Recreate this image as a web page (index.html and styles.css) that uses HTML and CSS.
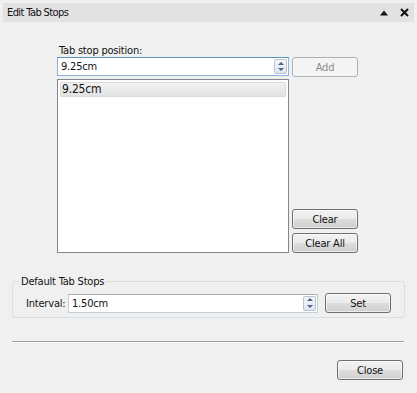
FILE: index.html
```html
<!DOCTYPE html>
<html lang="en">
<head>
    <meta charset="UTF-8">
    <meta name="viewport" content="width=device-width, initial-scale=1.0">
    <title>Edit Tab Stops</title>
    <link rel="stylesheet" href="styles.css">
</head>
<body>
    <div class="dialog">
        <div class="titlebar">
            <span class="title">Edit Tab Stops</span>
            <span class="title-icons">
                <svg width="8" height="6" viewBox="0 0 8 6"><path d="M0 5.5 L4 0.5 L8 5.5 Z" fill="#111"/></svg>
                <svg width="9" height="9" viewBox="0 0 9 9"><path d="M1 1 L8 8 M8 1 L1 8" stroke="#111" stroke-width="2"/></svg>
            </span>
        </div>

        <div class="editor">
            <div class="label">Tab stop position:</div>
            <div class="editor-body">
                <div class="editor-left">
                    <div class="spinbox focused">
                        <span class="spin-text">9.25cm</span>
                        <span class="spin-arrows"><span class="up"></span><span class="down"></span></span>
                    </div>
                    <div class="listbox">
                        <div class="list-item selected">9.25cm</div>
                    </div>
                </div>
                <div class="editor-right">
                    <button class="disabled">Add</button>
                    <button class="push-bottom">Clear</button>
                    <button>Clear All</button>
                </div>
            </div>
        </div>

        <fieldset class="group">
            <legend>Default Tab Stops</legend>
            <div class="group-row">
                <span class="row-label">Interval:</span>
                <div class="spinbox wide">
                    <span class="spin-text">1.50cm</span>
                    <span class="spin-arrows"><span class="up"></span><span class="down"></span></span>
                </div>
                <button>Set</button>
            </div>
        </fieldset>

        <div class="separator"></div>

        <div class="footer">
            <button>Close</button>
        </div>
    </div>
</body>
</html>
```

FILE: styles.css
```css
body {
    margin: 0;
    background-color: #f0f0f0;
    font-family: "DejaVu Sans Condensed", "Liberation Sans", Arial, sans-serif;
    font-size: 11px;
    letter-spacing: -0.2px;
    color: #111;
}
.dialog {
    width: 417px;
    height: 393px;
    box-sizing: border-box;
    padding-top: 3px;
}
.titlebar {
    margin: 0 3px;
    height: 19px;
    background-color: #e2e2e2;
    display: flex;
    align-items: center;
    justify-content: space-between;
    padding: 0 4px;
}
.title {
    letter-spacing: -0.6px;
}
.title-icons {
    display: flex;
    align-items: center;
    gap: 12px;
    padding-right: 1px;
}
.editor {
    margin-top: 22px;
    padding-left: 57px;
}
.label {
    line-height: 13px;
    padding-left: 2px;
}
.editor-body {
    display: flex;
    gap: 3px;
}
.editor-left {
    width: 232px;
    display: flex;
    flex-direction: column;
    gap: 3px;
}
.editor-right {
    width: 66px;
    display: flex;
    flex-direction: column;
    gap: 4px;
}
.push-bottom {
    margin-top: auto;
}
button {
    font-family: inherit;
    font-size: 11px;
    letter-spacing: -0.2px;
    height: 20px;
    width: 66px;
    padding: 0;
    border: 1px solid #707070;
    border-radius: 3px;
    color: #111;
    background: linear-gradient(#f2f2f2 0%, #ebebeb 50%, #dddddd 51%, #cfcfcf 100%);
    box-shadow: inset 0 0 0 1px rgba(255, 255, 255, 0.6);
}
button.disabled {
    border-color: #adb2b5;
    background: #f4f4f4;
    color: #8a8a8a;
    box-shadow: none;
}
.spinbox {
    height: 19px;
    box-sizing: border-box;
    border: 1px solid #c5cdd6;
    border-top-color: #abadb3;
    background-color: white;
    display: flex;
    align-items: center;
    justify-content: space-between;
    padding-left: 3px;
    padding-right: 1px;
}
.spinbox.focused {
    border-color: #8db2e3;
    border-top-color: #5794bf;
}
.spinbox.wide {
    width: 250px;
}
.spin-arrows {
    width: 13px;
    height: 15px;
    box-sizing: border-box;
    border: 1px solid #b8c4d2;
    border-radius: 2px;
    background: linear-gradient(#f4f7fa, #dfe6ee);
    display: flex;
    flex-direction: column;
    align-items: center;
    justify-content: space-around;
}
.up, .down {
    width: 0;
    height: 0;
    border-left: 3px solid transparent;
    border-right: 3px solid transparent;
}
.up {
    border-bottom: 3px solid #4d6185;
}
.down {
    border-top: 3px solid #4d6185;
}
.listbox {
    height: 174px;
    box-sizing: border-box;
    border: 1px solid #828790;
    background-color: white;
    padding: 2px;
}
.list-item {
    height: 15px;
    line-height: 15px;
    padding-left: 2px;
    font-size: 12px;
}
.list-item.selected {
    background: linear-gradient(#f4f4f4, #e0e0e0);
    border-radius: 2px;
    box-shadow: inset 0 0 0 1px #dadada;
}
.group {
    margin: 22px 13px 0 12px;
    padding: 5px 13px 4px 13px;
    border: 1px solid #d5dfe5;
    border-radius: 3px;
}
.group legend {
    padding: 0 2px;
    margin-left: -7px;
    line-height: 13px;
}
.group-row {
    display: flex;
    align-items: center;
}
.row-label {
    width: 42px;
}
.group-row button {
    margin-left: 7px;
}
.separator {
    margin: 23px 13px 0 12px;
    border-top: 1px solid #a0a0a0;
    border-bottom: 1px solid #ffffff;
}
.footer {
    display: flex;
    justify-content: flex-end;
    margin-top: 17px;
    padding-right: 14px;
}
```
